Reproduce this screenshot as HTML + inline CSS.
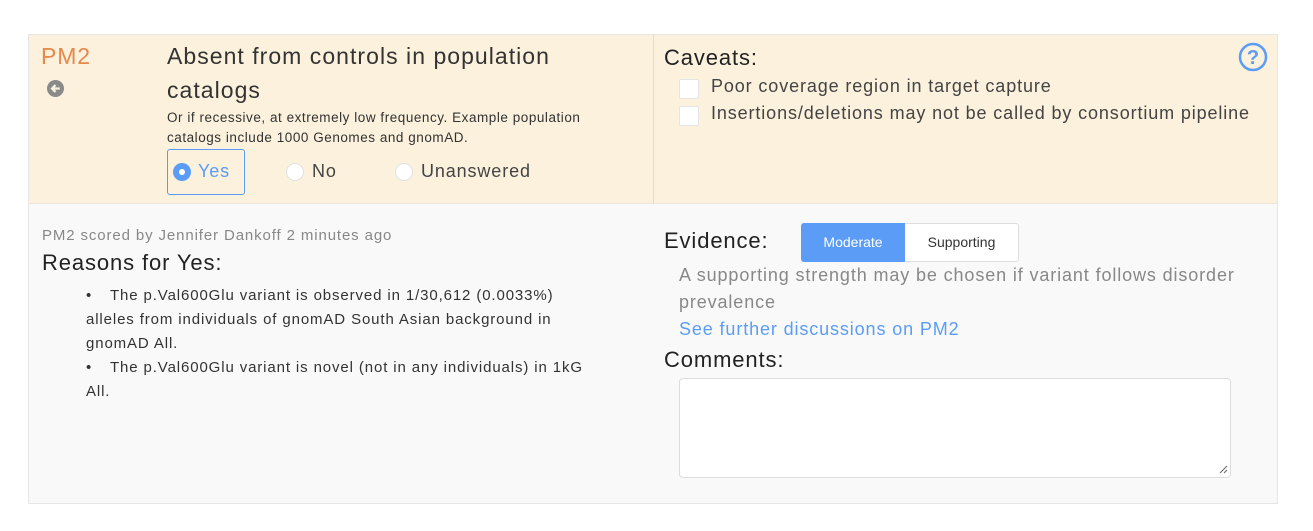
<!DOCTYPE html>
<html><head><meta charset="utf-8"><style>
*{margin:0;padding:0;box-sizing:border-box}
body{width:1313px;height:531px;background:#fff;font-family:"Liberation Sans",sans-serif;color:#333;position:relative;overflow:hidden;letter-spacing:0.055em}
.a{position:absolute;white-space:nowrap}
</style></head><body>
<div class="a" style="left:28px;top:34px;width:1250px;height:470px;border:1px solid #e6e6e6;background:#f9f9f9"></div>
<div class="a" style="left:29px;top:35px;width:1248px;height:169px;background:#fbf1dc;border-bottom:1px solid #ece6da"></div>
<div class="a" style="left:653px;top:35px;width:1px;height:169px;background:#e6dccb"></div>

<div class="a" style="left:41px;top:43px;font-size:23px;color:#e8884b">PM2</div>
<svg class="a" style="left:47px;top:80px" width="17" height="17" viewBox="0 0 16 16"><circle cx="8" cy="8" r="8" fill="#8a8a8a"/><path d="M12 8H5.5M8 4.8L4.8 8 8 11.2" stroke="#fbf1dc" stroke-width="2.2" fill="none"/></svg>

<div class="a" style="left:167px;top:43px;font-size:23px;color:#333;letter-spacing:0.045em">Absent from controls in population</div>
<div class="a" style="left:167px;top:77px;font-size:23px;color:#333;letter-spacing:0.045em">catalogs</div>
<div class="a" style="left:167px;top:110px;font-size:13.5px;color:#333;letter-spacing:0.04em">Or if recessive, at extremely low frequency. Example population</div>
<div class="a" style="left:167px;top:130px;font-size:13.5px;color:#333;letter-spacing:0.04em">catalogs include 1000 Genomes and gnomAD.</div>

<div class="a" style="left:167px;top:149px;width:78px;height:46px;border:1px solid #5b9cf7;border-radius:3px"></div>
<div class="a" style="left:173px;top:163px;width:18px;height:18px;border-radius:50%;background:#5b9cf7"></div>
<div class="a" style="left:179px;top:169px;width:6px;height:6px;border-radius:50%;background:#fff"></div>
<div class="a" style="left:198px;top:161px;font-size:18px;color:#5b9cf7">Yes</div>
<div class="a" style="left:286px;top:163px;width:18px;height:18px;border-radius:50%;background:#fff;border:1px solid #e2e2e2"></div>
<div class="a" style="left:312px;top:161px;font-size:18px;color:#444">No</div>
<div class="a" style="left:395px;top:163px;width:18px;height:18px;border-radius:50%;background:#fff;border:1px solid #e2e2e2"></div>
<div class="a" style="left:421px;top:161px;font-size:18px;color:#444">Unanswered</div>

<div class="a" style="left:664px;top:45px;font-size:22px;color:#222">Caveats:</div>
<svg class="a" style="left:1238px;top:42px" width="30" height="30" viewBox="0 0 30 30"><circle cx="15" cy="15" r="13" fill="none" stroke="#5b9cf7" stroke-width="2.5"/><text x="15" y="22" font-size="20" font-weight="bold" text-anchor="middle" fill="#5b9cf7" font-family="Liberation Sans" letter-spacing="0">?</text></svg>
<div class="a" style="left:679px;top:79px;width:20px;height:20px;background:#fff;border:1px solid #e4e4e4;border-radius:2px"></div>
<div class="a" style="left:711px;top:76px;font-size:18px;color:#444">Poor coverage region in target capture</div>
<div class="a" style="left:679px;top:106px;width:20px;height:20px;background:#fff;border:1px solid #e4e4e4;border-radius:2px"></div>
<div class="a" style="left:711px;top:103px;font-size:18px;color:#444">Insertions/deletions may not be called by consortium pipeline</div>

<div class="a" style="left:42px;top:227px;font-size:15px;color:#888">PM2 scored by Jennifer Dankoff 2 minutes ago</div>
<div class="a" style="left:42px;top:250px;font-size:22px;color:#222">Reasons for Yes:</div>
<div class="a" style="left:86px;top:284px;font-size:15px;color:#333;line-height:24px;white-space:normal;width:500px">
<span style="display:inline-block;width:24px">•</span>The p.Val600Glu variant is observed in 1/30,612 (0.0033%) alleles from individuals of gnomAD South Asian background in gnomAD All.<br>
<span style="display:inline-block;width:24px">•</span>The p.Val600Glu variant is novel (not in any individuals) in 1kG All.</div>

<div class="a" style="left:664px;top:228px;font-size:22px;color:#222">Evidence:</div>
<div class="a" style="left:801px;top:223px;width:104px;height:39px;background:#5b9cf7;border-radius:3px 0 0 3px;color:#fff;font-size:14px;line-height:39px;text-align:center;letter-spacing:0">Moderate</div>
<div class="a" style="left:905px;top:223px;width:114px;height:39px;background:#fff;border:1px solid #ddd;border-left:none;border-radius:0 3px 3px 0;color:#333;font-size:14px;line-height:37px;text-align:center;letter-spacing:0">Supporting</div>
<div class="a" style="left:679px;top:265px;font-size:18px;color:#888">A supporting strength may be chosen if variant follows disorder</div>
<div class="a" style="left:679px;top:292px;font-size:18px;color:#888">prevalence</div>
<div class="a" style="left:679px;top:319px;font-size:18px;color:#5b9cf7">See further discussions on PM2</div>
<div class="a" style="left:664px;top:347px;font-size:22px;color:#222">Comments:</div>
<div class="a" style="left:679px;top:378px;width:552px;height:100px;background:#fff;border:1px solid #ddd;border-radius:4px"></div>
<svg class="a" style="left:1219px;top:465px" width="9" height="9"><path d="M1 8L8 1M5 8L8 5" stroke="#666" stroke-width="1"/></svg>
</body></html>
